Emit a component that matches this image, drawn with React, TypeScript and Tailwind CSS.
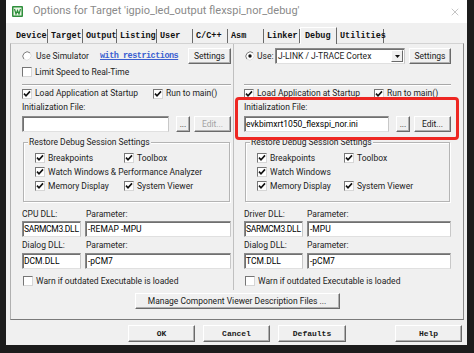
import React from 'react';
import { X } from 'lucide-react';

type Kids = { children?: React.ReactNode; className?: string };

function Check({ on = true }: { on?: boolean }) {
  return (
    <span className="flex h-[10px] w-[10px] shrink-0 items-center justify-center border border-t-[#767676] border-l-[#767676] border-r-[#d6d6d6] border-b-[#d6d6d6] bg-white">
      {on && (
        <svg width="8" height="8" viewBox="0 0 8 8">
          <path d="M1 3.6 L3 5.8 L7 1.4" fill="none" stroke="#111" strokeWidth="1.6" />
        </svg>
      )}
    </span>
  );
}

function CheckRow({ label, on = true, className = '' }: { label: string; on?: boolean; className?: string }) {
  return (
    <div className={`flex items-center gap-[3px] ${className}`}>
      <Check on={on} />
      <span className="whitespace-nowrap">{label}</span>
    </div>
  );
}

function Radio({ on = false }: { on?: boolean }) {
  return (
    <svg width="10" height="10" viewBox="0 0 10 10" className="shrink-0">
      <circle cx="5" cy="5" r="4.4" fill="#fff" />
      <path d="M1.9 8.1 A4.4 4.4 0 0 1 8.1 1.9" fill="none" stroke="#7a7a7a" strokeWidth="1" />
      <path d="M8.1 1.9 A4.4 4.4 0 0 1 1.9 8.1" fill="none" stroke="#dedede" strokeWidth="1" />
      {on && <circle cx="5" cy="5" r="1.7" fill="#111" />}
    </svg>
  );
}

function Btn({ children, className = '', disabled = false }: Kids & { disabled?: boolean }) {
  return (
    <div
      className={`flex shrink-0 items-center justify-center whitespace-nowrap border border-t-white border-l-white border-r-[#6a6a6a] border-b-[#6a6a6a] bg-[#f0f0f0] shadow-[inset_-1px_-1px_0_#b0b0b0] ${
        disabled ? 'text-[#a3a3a3]' : 'text-[#1a1a1a]'
      } ${className}`}
    >
      {children}
    </div>
  );
}

function Field({ value = '', className = '' }: { value?: string; className?: string }) {
  return (
    <div className={`flex h-[16px] items-center overflow-hidden whitespace-nowrap border border-t-[#8a8a8a] border-l-[#8a8a8a] border-r-[#c8c8c8] border-b-[#e0e0e0] bg-white text-black shadow-[inset_1px_1px_0_#707070] ${className}`}>
      {value}
    </div>
  );
}

function Separator() {
  return <div className="mt-[4px] h-[2px] border-t border-t-[#a8a8a8] border-b border-b-white" />;
}

function GroupBox({ children }: Kids) {
  return (
    <div className="relative mx-[1px] mt-[10px] flex h-[60px] flex-col border border-[#b4b4b4] pl-[11px] pt-[8px] shadow-[inset_1px_1px_0_#fff,1px_1px_0_#fff]">
      <span className="absolute left-[4px] top-[-7px] bg-[#f0f0f0] px-[1px] leading-[12px] whitespace-nowrap">
        Restore Debug Session Settings
      </span>
      {children}
    </div>
  );
}

function DllRows({ first, firstDll, firstParam, dialogDll, w }: { first: string; firstDll: string; firstParam: string; dialogDll: string; w: string }) {
  return (
    <>
      <div className="mt-[6px] flex h-[12px] items-center">
        <span className={w}>{first}</span>
        <span>Parameter:</span>
      </div>
      <div className="mt-[1px] flex gap-[4px]">
        <Field className="w-[59px] pl-[1px] tracking-[-0.3px]" value={firstDll} />
        <Field className="flex-1 pl-[2px]" value={firstParam} />
      </div>
      <div className="mt-[2px] flex h-[12px] items-center">
        <span className={w}>Dialog DLL:</span>
        <span>Parameter:</span>
      </div>
      <div className="mt-[2px] flex gap-[4px]">
        <Field className="w-[59px] pl-[1px]" value={dialogDll} />
        <Field className="flex-1 pl-[2px]" value="-pCM7" />
      </div>
      <CheckRow className="ml-[1px] mt-[5px] h-[14px]" on={false} label="Warn if outdated Executable is loaded" />
    </>
  );
}

const tabs: [string, string][] = [
  ['Device', 'w-[35px]'],
  ['Target', 'w-[35px]'],
  ['Output', 'w-[34px]'],
  ['Listing', 'w-[40px]'],
  ['User', 'w-[36px]'],
  ['C/C++', 'w-[35px]'],
  ['Asm', 'w-[36px]'],
  ['Linker', 'w-[36px]'],
  ['Debug', 'w-[37px]'],
  ['Utilities', 'w-[47px]'],
];

export default function App() {
  return (
    <div className="relative h-[353px] w-[474px] overflow-hidden bg-[#1c1c1c] pl-[6px]">
      <div className="flex h-[345px] w-[461px] flex-col bg-[#f0f0f0] font-['Roboto','Liberation_Sans',sans-serif] text-[8.5px] text-[#1c1c1c]">
        {/* title bar */}
        <div className="flex h-[23px] shrink-0 items-center bg-white pl-[6px] pr-[6px]">
          <svg width="11" height="11" viewBox="0 0 11 11" className="shrink-0">
            <rect x="0" y="0" width="11" height="11" rx="1" fill="#2f8f3c" />
            <rect x="1.5" y="1.5" width="8" height="8" fill="#e9f5e4" />
            <path d="M2.5 3 L4 8 L5.5 4.5 L7 8 L8.5 3" fill="none" stroke="#2f8f3c" strokeWidth="1.2" />
          </svg>
          <span className="ml-[10px] whitespace-nowrap text-[11px] text-[#8a8a8a]">
            Options for Target 'igpio_led_output flexspi_nor_debug'
          </span>
          <X className="ml-auto text-[#8a8a8a]" size={12} strokeWidth={1} />
        </div>

        {/* tabs */}
        <div className="flex h-[20px] shrink-0 items-end pl-[7px] font-['Liberation_Mono',monospace] text-[8.5px] font-bold text-[#111]">
          {tabs.map(([name, w]) =>
            name === 'Debug' ? (
              <div
                key={name}
                className={`relative z-10 -mb-[1px] flex h-[17px] items-center border-l border-t border-l-white border-t-white border-r border-r-[#6a6a6a] bg-[#f0f0f0] pl-[4px] pt-[1px] ${w}`}
              >
                {name}
              </div>
            ) : (
              <div key={name} className={`flex h-[14px] items-center border-r border-r-[#6a6a6a] pl-[3px] pt-[1px] ${w}`}>
                {name}
              </div>
            )
          )}
        </div>

        {/* tab page */}
        <div className="ml-[4px] mr-[3px] flex h-[277px] shrink-0 flex-col border border-t-[#d2d2d2] border-l-[#b0b0b0] border-r-[#8a8a8a] border-b-[#7a7a7a]">
          <div className="flex">
            {/* left column */}
            <div className="flex w-[223px] shrink-0 flex-col border-r border-r-[#c0c0c0] pb-[2px] pl-[11px] pr-[2px] pt-[4px]">
              <div className="flex h-[16px] items-center">
                <div className="flex w-[78px] items-center gap-[4px]">
                  <Radio />
                  <span>Use Simulator</span>
                </div>
                <span className="font-['Liberation_Mono',monospace] text-[8.5px] font-bold tracking-[-0.5px] text-[#3b5fd0] underline">
                  with restrictions
                </span>
                <Btn className="ml-auto h-[16px] w-[43px]">Settings</Btn>
              </div>
              <CheckRow className="h-[16px]" on={false} label="Limit Speed to Real-Time" />
              <Separator />
              <div className="flex h-[15px] items-center">
                <CheckRow className="w-[131px]" label="Load Application at Startup" />
                <CheckRow label="Run to main()" />
              </div>
              <div className="flex h-[12px] items-center">Initialization File:</div>
              <div className="mt-[3px] flex gap-[4px]">
                <Field className="flex-1" />
                <Btn className="ml-[3px] h-[16px] w-[14px]">...</Btn>
                <Btn className="h-[16px] w-[37px]" disabled>
                  Edit...
                </Btn>
              </div>
              <GroupBox>
                <div className="flex h-[14px]">
                  <CheckRow className="w-[89px]" label="Breakpoints" />
                  <CheckRow label="Toolbox" />
                </div>
                <CheckRow className="h-[14px]" label="Watch Windows & Performance Analyzer" />
                <div className="flex h-[14px]">
                  <CheckRow className="w-[89px]" label="Memory Display" />
                  <CheckRow label="System Viewer" />
                </div>
              </GroupBox>
              <DllRows first="CPU DLL:" firstDll="SARMCM3.DLL" firstParam="-REMAP -MPU" dialogDll="DCM.DLL" w="w-[64px]" />
            </div>

            {/* right column */}
            <div className="flex flex-1 flex-col pb-[2px] pl-[10px] pr-[12px] pt-[4px]">
              <div className="flex h-[16px] items-center">
                <span className="ml-[1px]">
                  <Radio on />
                </span>
                <span className="ml-[2px] w-[18px]">Use:</span>
                <div className="flex h-[16px] w-[130px] items-center border border-t-[#8a8a8a] border-l-[#8a8a8a] border-r-[#c8c8c8] border-b-[#e0e0e0] bg-white pl-[2px] shadow-[inset_1px_1px_0_#707070]">
                  <span className="flex-1 whitespace-nowrap">J-LINK / J-TRACE Cortex</span>
                  <span className="mr-[1px] flex h-[12px] w-[12px] items-center justify-center border border-t-white border-l-white border-r-[#6a6a6a] border-b-[#6a6a6a] bg-[#f0f0f0]">
                    <svg width="5" height="3" viewBox="0 0 5 3">
                      <path d="M0 0 H5 L2.5 3 Z" fill="#111" />
                    </svg>
                  </span>
                </div>
                <Btn className="ml-auto h-[16px] w-[42px]">Settings</Btn>
              </div>
              <div className="h-[16px]" />
              <Separator />
              <div className="flex h-[15px] items-center">
                <CheckRow className="w-[130px]" label="Load Application at Startup" />
                <CheckRow label="Run to main()" />
              </div>
              <div className="flex h-[12px] items-center">Initialization File:</div>
              <div className="mt-[3px] flex gap-[4px]">
                <Field className="flex-1 pl-[1px]" value="evkbimxrt1050_flexspi_nor.ini" />
                <Btn className="ml-[3px] h-[16px] w-[14px]">...</Btn>
                <Btn className="h-[16px] w-[37px]">Edit...</Btn>
              </div>
              <GroupBox>
                <div className="flex h-[14px]">
                  <CheckRow className="w-[87px]" label="Breakpoints" />
                  <CheckRow label="Toolbox" />
                </div>
                <CheckRow className="h-[14px]" label="Watch Windows" />
                <div className="flex h-[14px]">
                  <CheckRow className="w-[87px]" label="Memory Display" />
                  <CheckRow label="System Viewer" />
                </div>
              </GroupBox>
              <DllRows first="Driver DLL:" firstDll="SARMCM3.DLL" firstParam="-MPU" dialogDll="TCM.DLL" w="w-[63px]" />
            </div>
          </div>

          <div className="flex justify-center pt-[3px]">
            <Btn className="h-[16px] w-[205px]">Manage Component Viewer Description Files ...</Btn>
          </div>
        </div>

        {/* dialog buttons */}
        <div className="mt-[5px] flex h-[17px] shrink-0 gap-[8px] pl-[122px] font-['Liberation_Mono',monospace] text-[8px] font-bold">
          <Btn className="w-[67px]">OK</Btn>
          <Btn className="w-[67px]">Cancel</Btn>
          <Btn className="w-[68px]">Defaults</Btn>
          <Btn className="ml-[41px] w-[67px]">Help</Btn>
        </div>
      </div>

      {/* red highlight annotation */}
      <div className="absolute left-[235px] top-[97px] h-[43px] w-[224px] rounded-[4px] border-[3px] border-[#ee2722]" />
    </div>
  );
}
